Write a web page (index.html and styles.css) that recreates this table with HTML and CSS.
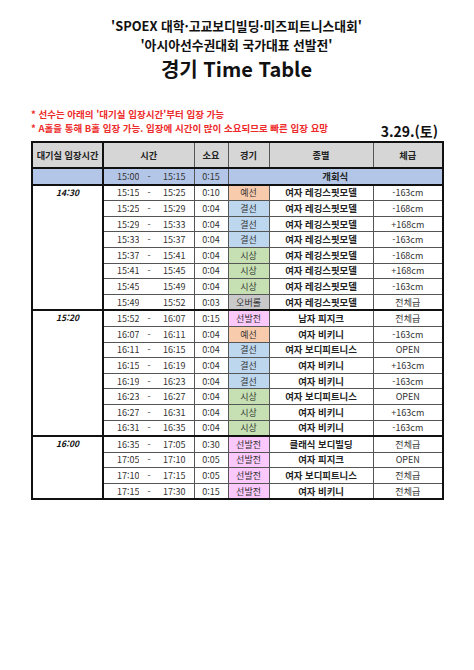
FILE: index.html
```html
<!DOCTYPE html>
<html lang="ko">
<head>
<meta charset="utf-8">
<link rel="stylesheet" href="styles.css">
</head>
<body>
<div class="page">
  <div class="title">
    <div class="t1">'SPOEX 대학·고교보디빌딩·미즈피트니스대회'</div>
    <div class="t1">'아시아선수권대회 국가대표 선발전'</div>
    <div class="t3">경기 Time Table</div>
  </div>
  <div class="info">
    <div class="notes">
      <div>* 선수는 아래의 '대기실 입장시간'부터 입장 가능</div>
      <div>* A홀을 통해 B홀 입장 가능. 입장에 시간이 많이 소요되므로 빠른 입장 요망</div>
    </div>
    <div class="date">3.29.(토)</div>
  </div>
  <table class="tt">
    <colgroup>
      <col class="w-wait"><col class="w-st"><col class="w-dash"><col class="w-en"><col class="w-dur"><col class="w-game"><col class="w-kind"><col class="w-cls">
    </colgroup>
    <thead>
      <tr class="head">
        <th class="h-wait">대기실 입장시간</th>
        <th colspan="3">시간</th>
        <th>소요</th>
        <th>경기</th>
        <th>종별</th>
        <th>체급</th>
      </tr>
    </thead>
    <tbody>
      <tr class="open">
        <td class="wait"></td><td class="st">15:00</td><td class="dash">-</td><td class="en">15:15</td><td>0:15</td><td colspan="3" class="kind">개회식</td>
      </tr>
    </tbody>
    <tbody class="grp">
      <tr><td class="wait" rowspan="8">14:30</td><td class="st">15:15</td><td class="dash">-</td><td class="en">15:25</td><td>0:10</td><td class="g-pre">예선</td><td class="kind">여자 레깅스핏모델</td><td>-163cm</td></tr>
      <tr><td class="st">15:25</td><td class="dash">-</td><td class="en">15:29</td><td>0:04</td><td class="g-fin">결선</td><td class="kind">여자 레깅스핏모델</td><td>-168cm</td></tr>
      <tr><td class="st">15:29</td><td class="dash">-</td><td class="en">15:33</td><td>0:04</td><td class="g-fin">결선</td><td class="kind">여자 레깅스핏모델</td><td>+168cm</td></tr>
      <tr><td class="st">15:33</td><td class="dash">-</td><td class="en">15:37</td><td>0:04</td><td class="g-fin">결선</td><td class="kind">여자 레깅스핏모델</td><td>-163cm</td></tr>
      <tr><td class="st">15:37</td><td class="dash">-</td><td class="en">15:41</td><td>0:04</td><td class="g-awd">시상</td><td class="kind">여자 레깅스핏모델</td><td>-168cm</td></tr>
      <tr><td class="st">15:41</td><td class="dash">-</td><td class="en">15:45</td><td>0:04</td><td class="g-awd">시상</td><td class="kind">여자 레깅스핏모델</td><td>+168cm</td></tr>
      <tr><td class="st">15:45</td><td class="dash"></td><td class="en">15:49</td><td>0:04</td><td class="g-awd">시상</td><td class="kind">여자 레깅스핏모델</td><td>-163cm</td></tr>
      <tr><td class="st">15:49</td><td class="dash"></td><td class="en">15:52</td><td>0:03</td><td class="g-ovr">오버롤</td><td class="kind">여자 레깅스핏모델</td><td>전체급</td></tr>
    </tbody>
    <tbody class="grp">
      <tr><td class="wait" rowspan="8">15:20</td><td class="st">15:52</td><td class="dash">-</td><td class="en">16:07</td><td>0:15</td><td class="g-sel">선발전</td><td class="kind">남자 피지크</td><td>전체급</td></tr>
      <tr><td class="st">16:07</td><td class="dash">-</td><td class="en">16:11</td><td>0:04</td><td class="g-pre">예선</td><td class="kind">여자 비키니</td><td>-163cm</td></tr>
      <tr><td class="st">16:11</td><td class="dash">-</td><td class="en">16:15</td><td>0:04</td><td class="g-fin">결선</td><td class="kind">여자 보디피트니스</td><td>OPEN</td></tr>
      <tr><td class="st">16:15</td><td class="dash">-</td><td class="en">16:19</td><td>0:04</td><td class="g-fin">결선</td><td class="kind">여자 비키니</td><td>+163cm</td></tr>
      <tr><td class="st">16:19</td><td class="dash">-</td><td class="en">16:23</td><td>0:04</td><td class="g-fin">결선</td><td class="kind">여자 비키니</td><td>-163cm</td></tr>
      <tr><td class="st">16:23</td><td class="dash">-</td><td class="en">16:27</td><td>0:04</td><td class="g-awd">시상</td><td class="kind">여자 보디피트니스</td><td>OPEN</td></tr>
      <tr><td class="st">16:27</td><td class="dash">-</td><td class="en">16:31</td><td>0:04</td><td class="g-awd">시상</td><td class="kind">여자 비키니</td><td>+163cm</td></tr>
      <tr><td class="st">16:31</td><td class="dash">-</td><td class="en">16:35</td><td>0:04</td><td class="g-awd">시상</td><td class="kind">여자 비키니</td><td>-163cm</td></tr>
    </tbody>
    <tbody class="grp">
      <tr><td class="wait" rowspan="4">16:00</td><td class="st">16:35</td><td class="dash">-</td><td class="en">17:05</td><td>0:30</td><td class="g-sel">선발전</td><td class="kind">클래식 보디빌딩</td><td>전체급</td></tr>
      <tr><td class="st">17:05</td><td class="dash">-</td><td class="en">17:10</td><td>0:05</td><td class="g-sel">선발전</td><td class="kind">여자 피지크</td><td>OPEN</td></tr>
      <tr><td class="st">17:10</td><td class="dash">-</td><td class="en">17:15</td><td>0:05</td><td class="g-sel">선발전</td><td class="kind">여자 보디피트니스</td><td>전체급</td></tr>
      <tr><td class="st">17:15</td><td class="dash">-</td><td class="en">17:30</td><td>0:15</td><td class="g-sel">선발전</td><td class="kind">여자 비키니</td><td>전체급</td></tr>
    </tbody>
  </table>
</div>
</body>
</html>
```

FILE: styles.css
```css
html, body {
  margin: 0;
  padding: 0;
  background: #ffffff;
}
body {
  font-family: "Noto Sans CJK KR", "Noto Sans", sans-serif;
  color: #1a1a1a;
  width: 474px;
}
.page {
  padding: 17px 0 0 31px;
  width: 411px;
}
.title {
  text-align: center;
  font-weight: 700;
  color: #111;
}
.t1 {
  font-size: 12.8px;
  line-height: 18.5px;
}
.t3 {
  font-size: 20px;
  line-height: 29px;
}
.info {
  display: flex;
  justify-content: space-between;
  align-items: flex-end;
  margin-top: 24px;
}
.notes {
  color: #ee2b2b;
  font-size: 9.5px;
  font-weight: 700;
  line-height: 14px;
  padding-bottom: 6px;
}
.date {
  font-size: 14px;
  font-weight: 700;
  line-height: 20px;
  padding-right: 4px;
  color: #111;
}
.tt {
  margin-top: 0;
  width: 411px;
  border-collapse: collapse;
  table-layout: fixed;
  border: 2px solid #111;
  font-size: 9px;
  color: #333;
}
.w-wait { width: 71px; }
.w-st { width: 36px; }
.w-dash { width: 20px; }
.w-en { width: 35px; }
.w-dur { width: 34px; }
.w-game { width: 41px; }
.w-kind { width: 104px; }
.w-cls { width: 70px; }
.tt th, .tt td {
  padding: 0;
  text-align: center;
  white-space: nowrap;
  overflow: hidden;
}
.tt td {
  border: 1px solid #555;
  height: 14.6px;
  line-height: 13px;
}
.head th {
  background: #d6d6d6;
  height: 24px;
  font-weight: 700;
  font-size: 9.2px;
  color: #222;
  border: 1px solid #555;
  border-bottom: 2px solid #111;
}
.head th.h-wait {
  border-right: 2px solid #111;
}
.tt td.wait {
  border-right: 2px solid #111;
  vertical-align: top;
  font-weight: 700;
  font-style: italic;
  color: #111;
  font-size: 8.5px;
}
.grp {
  border-top: 2px solid #111;
}
.tt td.st {
  text-align: left;
  padding-left: 13px;
  border-right: none;
}
.tt td.dash {
  border-left: none;
  border-right: none;
}
.tt td.en {
  text-align: left;
  padding-left: 4px;
  border-left: none;
}
.kind {
  font-weight: 700;
  font-size: 9.4px;
  color: #222;
}
.open td {
  background: #b4c6e7;
}
.g-pre { background: #f8cbad; }
.g-fin { background: #bdd7ee; }
.g-awd { background: #c6e0b4; }
.g-ovr { background: #c9c9c9; }
.g-sel { background: #fbc8fb; }
```
